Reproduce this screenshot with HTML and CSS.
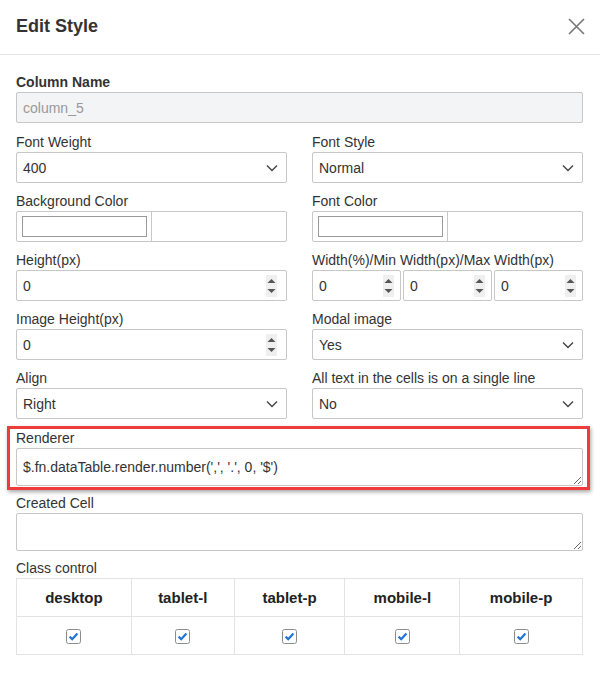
FILE: index.html
```html
<!DOCTYPE html>
<html lang="en">
<head>
<meta charset="utf-8">
<title>Edit Style</title>
<link rel="stylesheet" href="styles.css">
</head>
<body>
<div class="modal">
  <div class="modal-header">
    <h4 class="modal-title">Edit Style</h4>
    <button class="close" type="button" aria-label="Close">
      <svg width="17" height="17" viewBox="0 0 17 17"><path d="M1 1 L16 16 M16 1 L1 16" stroke="#777" stroke-width="1.6" fill="none"/></svg>
    </button>
  </div>
  <div class="modal-body">
    <div class="group first">
      <label class="label bold">Column Name</label>
      <div class="field disabled">column_5</div>
    </div>

    <div class="row">
      <div class="group">
        <label class="label">Font Weight</label>
        <div class="field select"><span class="value">400</span>
          <svg class="chev" width="12" height="8" viewBox="0 0 12 8"><path d="M1 1.5 L6 6.5 L11 1.5" stroke="#444" stroke-width="1.4" fill="none"/></svg>
        </div>
      </div>
      <div class="group">
        <label class="label">Font Style</label>
        <div class="field select"><span class="value">Normal</span>
          <svg class="chev" width="12" height="8" viewBox="0 0 12 8"><path d="M1 1.5 L6 6.5 L11 1.5" stroke="#444" stroke-width="1.4" fill="none"/></svg>
        </div>
      </div>
    </div>

    <div class="row">
      <div class="group">
        <label class="label">Background Color</label>
        <div class="field color">
          <div class="swatch-cell"><div class="swatch"></div></div>
          <div class="color-text"></div>
        </div>
      </div>
      <div class="group">
        <label class="label">Font Color</label>
        <div class="field color">
          <div class="swatch-cell"><div class="swatch"></div></div>
          <div class="color-text"></div>
        </div>
      </div>
    </div>

    <div class="row">
      <div class="group">
        <label class="label">Height(px)</label>
        <div class="field number"><span class="value">0</span>
          <span class="spin"><svg width="11" height="20" viewBox="0 0 11 20"><path d="M1.5 7 L5.5 3 L9.5 7 Z" fill="#555"/><path d="M1.5 13 L5.5 17 L9.5 13 Z" fill="#555"/></svg></span>
        </div>
      </div>
      <div class="group">
        <label class="label">Width(%)/Min Width(px)/Max Width(px)</label>
        <div class="triple">
          <div class="field number"><span class="value">0</span>
            <span class="spin"><svg width="11" height="20" viewBox="0 0 11 20"><path d="M1.5 7 L5.5 3 L9.5 7 Z" fill="#555"/><path d="M1.5 13 L5.5 17 L9.5 13 Z" fill="#555"/></svg></span>
          </div>
          <div class="field number"><span class="value">0</span>
            <span class="spin"><svg width="11" height="20" viewBox="0 0 11 20"><path d="M1.5 7 L5.5 3 L9.5 7 Z" fill="#555"/><path d="M1.5 13 L5.5 17 L9.5 13 Z" fill="#555"/></svg></span>
          </div>
          <div class="field number"><span class="value">0</span>
            <span class="spin"><svg width="11" height="20" viewBox="0 0 11 20"><path d="M1.5 7 L5.5 3 L9.5 7 Z" fill="#555"/><path d="M1.5 13 L5.5 17 L9.5 13 Z" fill="#555"/></svg></span>
          </div>
        </div>
      </div>
    </div>

    <div class="row">
      <div class="group">
        <label class="label">Image Height(px)</label>
        <div class="field number"><span class="value">0</span>
          <span class="spin"><svg width="11" height="20" viewBox="0 0 11 20"><path d="M1.5 7 L5.5 3 L9.5 7 Z" fill="#555"/><path d="M1.5 13 L5.5 17 L9.5 13 Z" fill="#555"/></svg></span>
        </div>
      </div>
      <div class="group">
        <label class="label">Modal image</label>
        <div class="field select"><span class="value">Yes</span>
          <svg class="chev" width="12" height="8" viewBox="0 0 12 8"><path d="M1 1.5 L6 6.5 L11 1.5" stroke="#444" stroke-width="1.4" fill="none"/></svg>
        </div>
      </div>
    </div>

    <div class="row last-row">
      <div class="group">
        <label class="label">Align</label>
        <div class="field select"><span class="value">Right</span>
          <svg class="chev" width="12" height="8" viewBox="0 0 12 8"><path d="M1 1.5 L6 6.5 L11 1.5" stroke="#444" stroke-width="1.4" fill="none"/></svg>
        </div>
      </div>
      <div class="group">
        <label class="label">All text in the cells is on a single line</label>
        <div class="field select"><span class="value">No</span>
          <svg class="chev" width="12" height="8" viewBox="0 0 12 8"><path d="M1 1.5 L6 6.5 L11 1.5" stroke="#444" stroke-width="1.4" fill="none"/></svg>
        </div>
      </div>
    </div>

    <div class="group text-group highlighted">
      <label class="label">Renderer</label>
      <textarea class="area">$.fn.dataTable.render.number(',', '.', 0, '$')</textarea>
    </div>

    <div class="group text-group">
      <label class="label">Created Cell</label>
      <textarea class="area"></textarea>
    </div>

    <div class="group">
      <label class="label">Class control</label>
      <table class="classes">
        <thead>
          <tr><th>desktop</th><th>tablet-l</th><th>tablet-p</th><th>mobile-l</th><th>mobile-p</th></tr>
        </thead>
        <tbody>
          <tr>
            <td><svg class="cb" width="15" height="15" viewBox="0 0 15 15"><rect x="0.5" y="0.5" width="14" height="14" rx="2" fill="#fff" stroke="#8c8c8c"/><path d="M3.6 7.6 L6.2 10.2 L11.4 4.4" stroke="#1f74d6" stroke-width="2.2" fill="none"/></svg></td>
            <td><svg class="cb" width="15" height="15" viewBox="0 0 15 15"><rect x="0.5" y="0.5" width="14" height="14" rx="2" fill="#fff" stroke="#8c8c8c"/><path d="M3.6 7.6 L6.2 10.2 L11.4 4.4" stroke="#1f74d6" stroke-width="2.2" fill="none"/></svg></td>
            <td><svg class="cb" width="15" height="15" viewBox="0 0 15 15"><rect x="0.5" y="0.5" width="14" height="14" rx="2" fill="#fff" stroke="#8c8c8c"/><path d="M3.6 7.6 L6.2 10.2 L11.4 4.4" stroke="#1f74d6" stroke-width="2.2" fill="none"/></svg></td>
            <td><svg class="cb" width="15" height="15" viewBox="0 0 15 15"><rect x="0.5" y="0.5" width="14" height="14" rx="2" fill="#fff" stroke="#8c8c8c"/><path d="M3.6 7.6 L6.2 10.2 L11.4 4.4" stroke="#1f74d6" stroke-width="2.2" fill="none"/></svg></td>
            <td><svg class="cb" width="15" height="15" viewBox="0 0 15 15"><rect x="0.5" y="0.5" width="14" height="14" rx="2" fill="#fff" stroke="#8c8c8c"/><path d="M3.6 7.6 L6.2 10.2 L11.4 4.4" stroke="#1f74d6" stroke-width="2.2" fill="none"/></svg></td>
          </tr>
        </tbody>
      </table>
    </div>
  </div>
</div>
</body>
</html>
```
FILE: styles.css
```css
* { box-sizing: border-box; }

html, body {
  margin: 0;
  padding: 0;
  background: #fff;
}

body {
  font-family: "Liberation Sans", Arial, sans-serif;
  font-size: 14px;
  color: #333;
}

.modal {
  width: 600px;
  background: #fff;
}

.modal-header {
  height: 55px;
  border-bottom: 1px solid #e5e5e5;
  display: flex;
  align-items: center;
  justify-content: space-between;
  padding: 0 15px 2px 16px;
}

.modal-title {
  margin: 0;
  font-size: 18px;
  font-weight: bold;
  color: #333;
}

.close {
  border: 0;
  background: none;
  padding: 0;
  width: 17px;
  height: 17px;
  display: flex;
  cursor: pointer;
}

.modal-body {
  padding: 17px 17px 0 16px;
}

.row {
  display: grid;
  grid-template-columns: 1fr 1fr;
  column-gap: 25px;
}

.group {
  margin-bottom: 8px;
}

.group.first {
  margin-bottom: 9px;
}

.last-row .group {
  margin-bottom: 9px;
}

.group.text-group {
  margin-bottom: 7px;
}

.label {
  display: block;
  height: 20px;
  line-height: 20px;
  margin-bottom: 0;
  color: #333;
}

.label.bold {
  font-weight: bold;
}

.field {
  height: 31px;
  border: 1px solid #c7c7c7;
  border-radius: 2px;
  padding: 0 6px;
  display: flex;
  align-items: center;
  background: #fff;
  color: #333;
}

.field.disabled {
  background: #f3f4f5;
  color: #999;
}

.field.select,
.field.number {
  justify-content: space-between;
}

.chev {
  margin-right: 2px;
}

.spin {
  display: flex;
  align-items: center;
  justify-content: center;
  width: 11px;
  height: 22px;
  background: #efefef;
  margin-right: 3px;
}

.triple {
  display: grid;
  grid-template-columns: 1fr 1fr 1fr;
  column-gap: 2px;
}

.triple .spin {
  margin-right: 0;
}

.field.color {
  padding: 0;
}

.swatch-cell {
  width: 135px;
  height: 100%;
  border-right: 1px solid #c7c7c7;
  padding: 4px 4px 4px 5px;
}

.swatch {
  width: 100%;
  height: 100%;
  border: 1px solid #9a9a9a;
  background: #fff;
}

.color-text {
  flex: 1;
}

.area {
  display: block;
  width: 100%;
  height: 38px;
  border: 1px solid #c7c7c7;
  border-radius: 2px;
  padding: 8px 6px;
  margin: 0;
  font-family: "Liberation Sans", Arial, sans-serif;
  font-size: 14px;
  line-height: 20px;
  color: #333;
  resize: vertical;
  overflow: hidden;
}

.highlighted {
  position: relative;
}

.highlighted::after {
  content: "";
  position: absolute;
  top: -2px;
  left: -9px;
  right: -7px;
  bottom: -4px;
  border: 3px solid #ee3b3b;
  box-shadow: 1px 2px 4px rgba(0, 0, 0, 0.35);
  pointer-events: none;
}

.classes {
  width: 100%;
  border-collapse: collapse;
  margin-top: 0;
}

.classes th,
.classes td {
  border: 1px solid #e3e3e3;
  text-align: center;
  height: 38px;
  padding: 0;
}

.classes th {
  font-weight: bold;
  font-size: 15px;
  color: #222;
}

.classes td {
  vertical-align: middle;
}

.classes th:nth-child(1) { width: 115px; }
.classes th:nth-child(2) { width: 103px; }
.classes th:nth-child(3) { width: 111px; }
.classes th:nth-child(4) { width: 115px; }
.classes th:nth-child(5) { width: 123px; }

.cb {
  display: block;
  margin: 1px auto 0;
}
```
